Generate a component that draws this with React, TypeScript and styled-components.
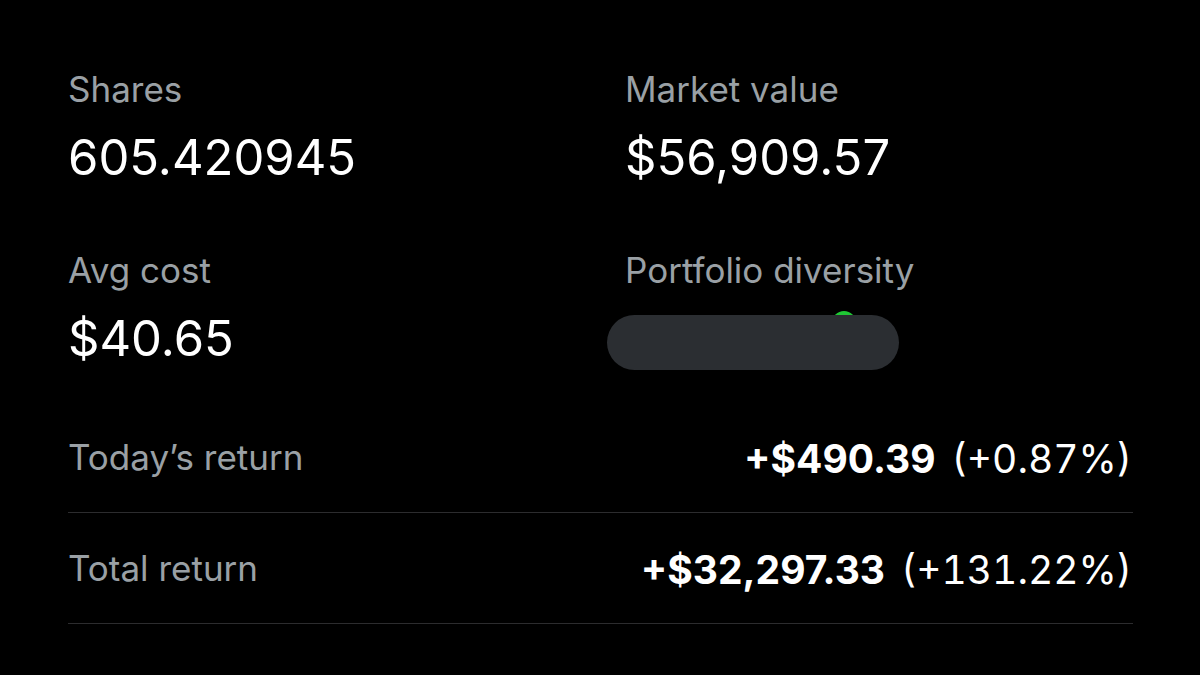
import React from "react";
import styled, { createGlobalStyle } from "styled-components";

const Global = createGlobalStyle`
  html, body {
    margin: 0;
    padding: 0;
    background: #000;
  }
  body {
    font-family: Inter, "Liberation Sans", sans-serif;
    color: #fff;
  }
`;

const App = () => {
  return (
    <>
      <Global />
      <Page>
        <Stats>
          <Stat>
            <Label>Shares</Label>
            <Value>605.420945</Value>
          </Stat>
          <Stat>
            <Label>Market value</Label>
            <Value>$56,909.57</Value>
          </Stat>
          <Stat>
            <Label>Avg cost</Label>
            <Value>$40.65</Value>
          </Stat>
          <Stat>
            <Label>Portfolio diversity</Label>
            <DiversityBar>
              <GreenDot />
              <Pill />
            </DiversityBar>
          </Stat>
        </Stats>
        <Returns>
          <ReturnRow>
            <RowLabel>Today’s return</RowLabel>
            <RowValue>
              <Amount>+$490.39</Amount>
              <Percent>(+0.87%)</Percent>
            </RowValue>
          </ReturnRow>
          <ReturnRow>
            <RowLabel>Total return</RowLabel>
            <RowValue>
              <Amount>+$32,297.33</Amount>
              <Percent>(+131.22%)</Percent>
            </RowValue>
          </ReturnRow>
        </Returns>
      </Page>
    </>
  );
};

export default App;

const Page = styled.div`
  width: 1200px;
  height: 675px;
  box-sizing: border-box;
  padding: 68px 67px 0 68px;
  background: #000;
  overflow: hidden;
`;

const Stats = styled.div`
  display: grid;
  grid-template-columns: 557px 1fr;
  row-gap: 63px;
`;

const Stat = styled.div`
  display: flex;
  flex-direction: column;
  gap: 20px;
`;

const Label = styled.div`
  font-size: 35px;
  line-height: 42px;
  color: #9aa0a5;
`;

const Value = styled.div`
  font-size: 49px;
  line-height: 56px;
  color: #fff;
`;

const DiversityBar = styled.div`
  position: relative;
  height: 56px;
  margin-left: -18px;
`;

const Pill = styled.div`
  position: absolute;
  left: 0;
  top: 4px;
  width: 292px;
  height: 55px;
  border-radius: 28px;
  background: #2b2e32;
`;

const GreenDot = styled.div`
  position: absolute;
  left: 225px;
  top: 0;
  width: 24px;
  height: 24px;
  border-radius: 50%;
  background: #1fc734;
`;

const Returns = styled.div`
  display: flex;
  flex-direction: column;
  margin-top: 35px;
`;

const ReturnRow = styled.div`
  display: flex;
  justify-content: space-between;
  align-items: center;
  box-sizing: border-box;
  height: 111px;
  border-bottom: 1px solid #2c2c2e;
  padding: 0 1px 0 0;
`;

const RowLabel = styled.div`
  font-size: 35px;
  line-height: 42px;
  color: #9aa0a5;
`;

const RowValue = styled.div`
  display: flex;
  align-items: baseline;
  gap: 16px;
  font-size: 39px;
  line-height: 48px;
  margin-top: 4px;
`;

const Amount = styled.span`
  font-weight: 700;
  color: #fff;
`;

const Percent = styled.span`
  font-weight: 400;
  color: #fff;
  font-variant-numeric: tabular-nums;
`;
